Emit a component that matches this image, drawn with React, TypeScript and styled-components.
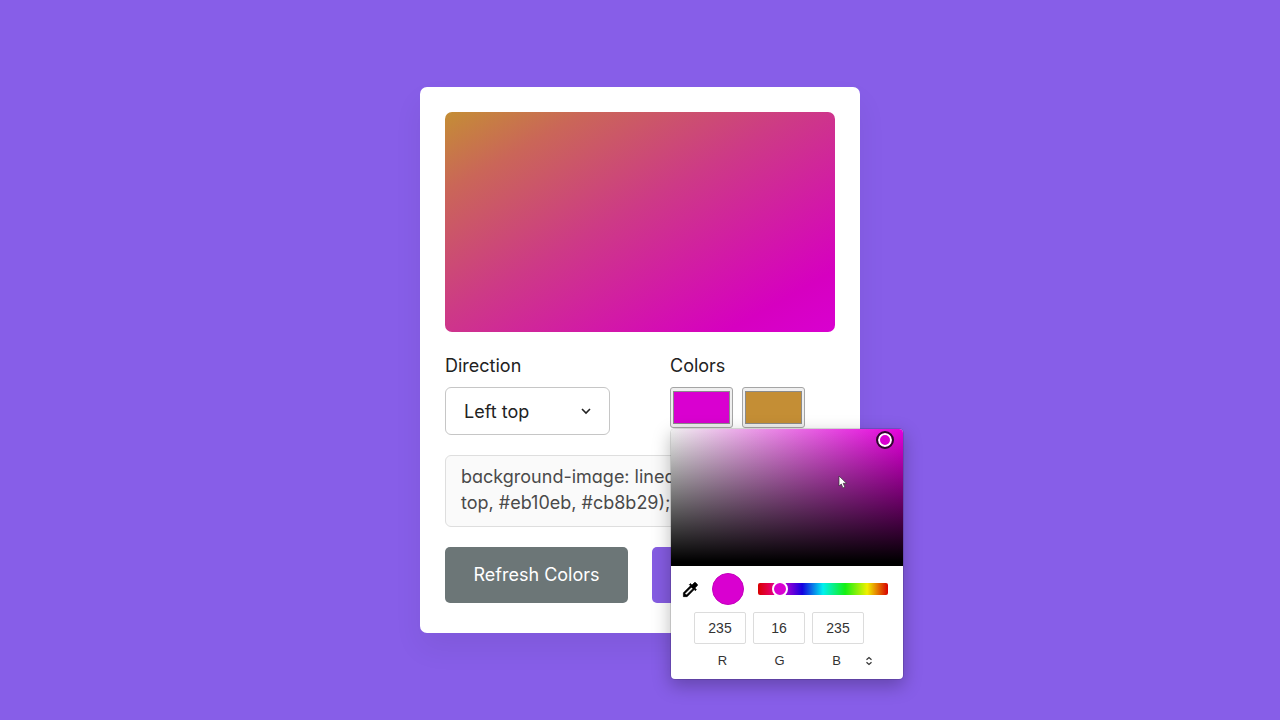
import React, { useState } from "react";
import styled, { createGlobalStyle } from "styled-components";

const GlobalStyle = createGlobalStyle`
  * { box-sizing: border-box; }
  body {
    margin: 0;
    background: #875ee8;
    color: #222;
    font-family: Inter, "Open Sans", sans-serif;
    font-feature-settings: "cv11";
    font-size: 18px;
  }
`;

const Page = styled.main`
  min-height: 100vh;
  display: flex;
  align-items: center;
  justify-content: center;
`;

const Card = styled.section`
  width: 100%;
  max-width: 440px;
  padding: 25px 25px 30px;
  background: #fff;
  border-radius: 7px;
  box-shadow: 0 15px 30px rgba(0, 0, 0, 0.06);
`;

const Preview = styled.div`
  height: 220px;
  border-radius: 7px;
  background: linear-gradient(to left top, #d900d0, #d600c0 14%, #cd3a86 54%, #ca6658 82%, #c48e35);
`;

const Options = styled.div`
  display: grid;
  grid-template-columns: 165px 1fr;
  column-gap: 60px;
  margin: 20px 0;
`;

const Column = styled.div`
  position: relative;
`;

const Label = styled.label`
  display: block;
  line-height: 27px;
  margin-bottom: 8px;
`;

const SelectBox = styled.div`
  position: relative;

  svg {
    position: absolute;
    right: 19px;
    top: 20px;
    pointer-events: none;
  }
`;

const Select = styled.select`
  appearance: none;
  width: 100%;
  height: 48px;
  padding: 0 18px;
  border: 1px solid #c6c6c6;
  border-radius: 6px;
  background: #fff;
  color: inherit;
  font: inherit;
  font-feature-settings: inherit;
`;

const Swatches = styled.div`
  display: flex;
  gap: 9px;
`;

const Swatch = styled.input`
  width: 63px;
  height: 41px;
  padding: 3px 1px;
  border: 1px solid #a5a5a5;
  border-radius: 3px;
  background: #efefef;

  &::-webkit-color-swatch-wrapper { padding: 0 1px; }
  &::-webkit-color-swatch { border: 1px solid #8b8b8b; border-radius: 0; }
`;

const Code = styled.textarea`
  display: block;
  width: 100%;
  height: 72px;
  padding: 8px 15px;
  border: 1px solid #dedede;
  border-radius: 6px;
  background: #fafafa;
  color: #4a4a4a;
  font: inherit;
  font-feature-settings: inherit;
  line-height: 26px;
  resize: none;
  overflow: hidden;
`;

const Buttons = styled.div`
  display: grid;
  grid-template-columns: 1fr 1fr;
  gap: 24px;
  margin-top: 20px;
`;

const Button = styled.button<{ $color: string }>`
  height: 56px;
  padding: 0 0 2px;
  border: 0;
  border-radius: 5px;
  background: ${(p) => p.$color};
  color: #fff;
  font: inherit;
  font-feature-settings: inherit;
`;

const Picker = styled.div`
  position: absolute;
  z-index: 1;
  top: 76px;
  left: 0;
  width: 234px;
  border: 1px solid rgba(0, 0, 0, 0.12);
  border-radius: 5px;
  background: #fff;
  background-clip: padding-box;
  box-shadow: 0 6px 18px rgba(0, 0, 0, 0.26);
  color: #333;
  font-family: "Liberation Sans", Arial, sans-serif;
  font-size: 14px;
`;

const Shade = styled.div`
  position: relative;
  height: 137px;
  border-radius: 4px 4px 0 0;
  background:
    linear-gradient(to top, #000 3%, transparent),
    linear-gradient(to right, #eee, #e400dc);
`;

const Ring = styled.span`
  position: absolute;
  top: 2px;
  right: 9px;
  width: 18px;
  height: 18px;
  border: 2px solid #2b0a2a;
  border-radius: 50%;
  background: #d800d0;
  box-shadow: inset 0 0 0 2px #fff;
`;

const Pointer = styled.svg`
  position: absolute;
  left: 167px;
  top: 46px;
`;

const Tools = styled.div`
  display: flex;
  align-items: center;
  padding: 7px 15px 7px 10px;
`;

const Dropper = styled.button`
  display: flex;
  padding: 0;
  border: 0;
  background: none;
  color: #000;
`;

const Current = styled.span`
  width: 32px;
  height: 32px;
  margin: 0 14px 0 12px;
  border: 1px solid #c400bd;
  border-radius: 50%;
  background: #d900d0;
`;

const Hue = styled.input`
  appearance: none;
  flex: 1;
  min-width: 0;
  height: 12px;
  margin: 0;
  border-radius: 2px;
  background: linear-gradient(to right, #d80000, #e4004c 8%, #d800d0 17%, #1400e0 34%, #00f0f0 50%, #14f014 67%, #f0f000 84%, #d80000);

  &::-webkit-slider-thumb {
    appearance: none;
    width: 16px;
    height: 16px;
    border: 2px solid #fff;
    border-radius: 50%;
    background: #d900d0;
  }
`;

const Channels = styled.div`
  display: flex;
  gap: 7px;
  padding: 0 23px;
`;

const Channel = styled.input`
  width: 52px;
  height: 32px;
  padding: 0 0 1px;
  border: 1px solid #dcdcdc;
  border-radius: 2px;
  background: #fff;
  color: inherit;
  font: inherit;
  text-align: center;
`;

const ChannelNames = styled.div`
  display: grid;
  grid-template-columns: 57px 57px 57px 8px;
  align-items: center;
  padding: 8px 23px 9px;
  text-align: center;
  line-height: 18px;
  font-size: 13px;
`;

const Stepper = styled.button`
  display: flex;
  padding: 0;
  border: 0;
  background: none;
  color: #333;
`;

const channels = [
  { name: "R", value: 235 },
  { name: "G", value: 16 },
  { name: "B", value: 235 },
];

function ColorPicker() {
  return (
    <Picker>
      <Shade>
        <Ring />
        <Pointer width="10" height="14" viewBox="0 0 10 14">
          <path d="M1 1v10l2.3-2 1.6 3.9 2-0.8-1.7-3.8h3.3z" fill="#fff" stroke="#333" strokeWidth="0.7" />
        </Pointer>
      </Shade>
      <Tools>
        <Dropper aria-label="Pick a color from the screen">
          <svg width="19" height="19" viewBox="0 0 24 24" fill="currentColor" stroke="currentColor" strokeWidth="0.8">
            <path d="M20.71 5.63l-2.34-2.34a1 1 0 0 0-1.41 0l-3.12 3.12-1.93-1.91-1.41 1.41 1.42 1.42L3 16.25V21h4.75l8.92-8.92 1.42 1.42 1.41-1.41-1.92-1.92 3.12-3.12c.4-.4.4-1.03.01-1.42zM6.92 19L5 17.08l8.06-8.06 1.92 1.92L6.92 19z" />
          </svg>
        </Dropper>
        <Current />
        <Hue type="range" min="0" max="360" defaultValue="45" aria-label="Hue" />
      </Tools>
      <Channels>
        {channels.map((c) => (
          <Channel key={c.name} id={`channel-${c.name}`} defaultValue={c.value} />
        ))}
      </Channels>
      <ChannelNames>
        {channels.map((c) => (
          <label key={c.name} htmlFor={`channel-${c.name}`}>{c.name}</label>
        ))}
        <Stepper aria-label="Change color format">
          <svg width="8" height="10" viewBox="0 0 8 10" fill="none" stroke="currentColor" strokeWidth="1.2">
            <path d="M1.5 3.8 4 1.5l2.5 2.3M1.5 6.2 4 8.5l2.5-2.3" />
          </svg>
        </Stepper>
      </ChannelNames>
    </Picker>
  );
}

export default function App() {
  const [direction, setDirection] = useState("Left top");

  return (
    <Page>
      <GlobalStyle />
      <Card>
        <Preview />
        <Options>
          <Column>
            <Label htmlFor="direction">Direction</Label>
            <SelectBox>
              <Select id="direction" value={direction} onChange={(e) => setDirection(e.target.value)}>
                <option>Left top</option>
                <option>Right top</option>
                <option>Left bottom</option>
                <option>Right bottom</option>
              </Select>
              <svg width="10" height="8" viewBox="0 0 10 8" fill="none" stroke="#222" strokeWidth="1.6">
                <path d="M1 2 5 6l4-4" />
              </svg>
            </SelectBox>
          </Column>
          <Column>
            <Label htmlFor="first-color">Colors</Label>
            <Swatches>
              <Swatch id="first-color" type="color" defaultValue="#d900d0" />
              <Swatch type="color" defaultValue="#c48e35" aria-label="Second color" />
            </Swatches>
            <ColorPicker />
          </Column>
        </Options>
        <Code
          readOnly
          aria-label="CSS code"
          value="background-image: linear-gradient(to left top, #eb10eb, #cb8b29);"
        />
        <Buttons>
          <Button $color="#6c7677">Refresh Colors</Button>
          <Button $color="#855ce2">Copy Code</Button>
        </Buttons>
      </Card>
    </Page>
  );
}
